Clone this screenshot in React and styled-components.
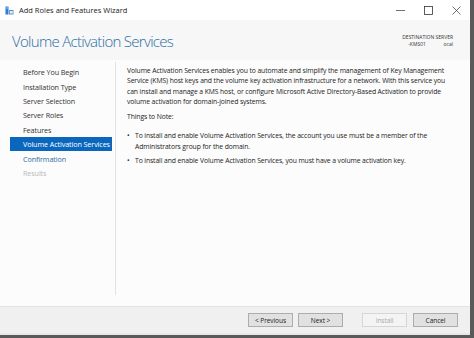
import React from 'react';
import styled, { createGlobalStyle } from 'styled-components';

const GlobalStyle = createGlobalStyle`
  html, body {
    margin: 0;
    padding: 0;
    background: #fff;
  }
  body {
    font-family: "Open Sans", "Noto Sans", sans-serif;
    color: #1e1e1e;
  }
`;

const Frame = styled.div`
  width: 474px;
  height: 338px;
  display: flex;
  background: #5a5a5a;
  overflow: hidden;
`;

const Window = styled.div`
  width: 470px;
  height: 335px;
  display: flex;
  flex-direction: column;
  background: #fcfcfc;
`;

const TitleBar = styled.div`
  height: 20px;
  display: flex;
  align-items: center;
  background: #fff;
  padding-left: 5px;
`;

const TitleText = styled.span`
  font-size: 7.5px;
  margin-left: 5px;
  color: #222;
`;

const Controls = styled.div`
  margin-left: auto;
  display: flex;
`;

const Control = styled.div`
  width: 28px;
  height: 20px;
  display: flex;
  align-items: center;
  justify-content: center;
`;

const Header = styled.div`
  height: 40px;
  display: flex;
  align-items: center;
  justify-content: space-between;
  padding: 0 17px 0 12px;
  background: #f7f7f7;
`;

const PageTitle = styled.h1`
  margin: 2px 0 0;
  font-size: 15px;
  font-weight: 300;
  color: #2b6da3;
  letter-spacing: -0.7px;
`;

const Dest = styled.div`
  font-size: 5px;
  line-height: 7px;
  color: #333;
  text-align: right;
  margin-top: 2px;
`;

const DestRow = styled.div`
  display: flex;
  justify-content: space-between;
  padding-left: 6px;
`;

const Body = styled.div`
  flex: 1;
  display: flex;
  padding-top: 2px;
  background: #fcfcfc;
`;

const Sidebar = styled.ul`
  list-style: none;
  margin: 0;
  padding: 3px 0 0 10px;
  height: 233px;
  box-sizing: border-box;
  border-right: 1px solid #e2e2e2;
  width: 116px;
`;

const Step = styled.li`
  height: 14.4px;
  display: flex;
  align-items: center;
  padding-left: 13px;
  font-size: 7.2px;
  letter-spacing: -0.1px;
  white-space: nowrap;
  margin-right: 3px;
  color: ${p => (p.$active ? '#fff' : p.$state === 'next' ? '#2b6da3' : p.$state === 'off' ? '#b9b9b9' : '#333')};
  background: ${p => (p.$active ? '#0b67bd' : 'transparent')};
`;

const Content = styled.div`
  flex: 1;
  padding: 4px 4px 0 11px;
  font-size: 6.8px;
  letter-spacing: -0.1px;
  line-height: 10.3px;
  color: #222;
  white-space: nowrap;
`;

const Para = styled.p`
  margin: 0 0 5px;
`;

const Bullets = styled.ul`
  margin: 9px 0 0;
  padding: 0;
  list-style: none;
`;

const Bullet = styled.li`
  position: relative;
  padding-left: 8px;
  margin-bottom: 4px;
  &::before {
    content: '•';
    position: absolute;
    left: 0;
  }
`;

const Footer = styled.div`
  height: 26px;
  display: flex;
  align-items: center;
  justify-content: flex-end;
  padding-right: 12px;
  background: #f0f0f0;
  border-top: 1px solid #e3e3e3;
  border-bottom: 2px solid #e8e8e8;
`;

const Button = styled.div`
  width: 45px;
  height: 14px;
  box-sizing: border-box;
  display: flex;
  align-items: center;
  justify-content: center;
  font-size: 6.6px;
  letter-spacing: -0.1px;
  background: ${p => (p.$disabled ? '#f4f4f4' : '#e1e1e1')};
  border: 1px solid ${p => (p.$disabled ? '#d6d6d6' : '#adadad')};
  color: ${p => (p.$disabled ? '#a9a9a9' : '#222')};
  margin-left: ${p => p.$gap || 5}px;
`;

const WizardIcon = () => (
  <svg width="9" height="9" viewBox="0 0 9 9">
    <rect x="0.5" y="0.5" width="3" height="8" fill="#2a7fd4" />
    <rect x="1" y="1.5" width="2" height="1" fill="#9cd0ff" />
    <rect x="4" y="4" width="4.5" height="4.5" fill="#5b8fc7" />
    <rect x="4.8" y="5" width="3" height="2.6" fill="#d7e9fa" />
  </svg>
);

const steps = [
  ['Before You Begin', 'done'],
  ['Installation Type', 'done'],
  ['Server Selection', 'done'],
  ['Server Roles', 'done'],
  ['Features', 'done'],
  ['Volume Activation Services', 'active'],
  ['Confirmation', 'next'],
  ['Results', 'off'],
];

export default function App() {
  return (
    <Frame>
      <GlobalStyle />
      <Window>
        <TitleBar>
          <WizardIcon />
          <TitleText>Add Roles and Features Wizard</TitleText>
          <Controls>
            <Control>
              <svg width="9" height="9" viewBox="0 0 9 9">
                <path d="M0 4.5h9" stroke="#333" strokeWidth="0.7" />
              </svg>
            </Control>
            <Control>
              <svg width="9" height="9" viewBox="0 0 9 9">
                <rect x="0.5" y="0.5" width="8" height="8" fill="none" stroke="#333" strokeWidth="0.8" />
              </svg>
            </Control>
            <Control>
              <svg width="9" height="9" viewBox="0 0 9 9">
                <path d="M0.5 0.5l8 8M8.5 0.5l-8 8" stroke="#333" strokeWidth="0.7" />
              </svg>
            </Control>
          </Controls>
        </TitleBar>
        <Header>
          <PageTitle>Volume Activation Services</PageTitle>
          <Dest>
            <div>DESTINATION SERVER</div>
            <DestRow>
              <span>-KMS01</span>
              <span>ocal</span>
            </DestRow>
          </Dest>
        </Header>
        <Body>
          <Sidebar>
            {steps.map(([label, state]) => (
              <Step key={label} $active={state === 'active'} $state={state}>
                {label}
              </Step>
            ))}
          </Sidebar>
          <Content>
            <Para>
              Volume Activation Services enables you to automate and simplify the management of Key Management
              <br />
              Service (KMS) host keys and the volume key activation infrastructure for a network. With this service you
              <br />
              can install and manage a KMS host, or configure Microsoft Active Directory-Based Activation to provide
              <br />
              volume activation for domain-joined systems.
            </Para>
            <Para>Things to Note:</Para>
            <Bullets>
              <Bullet>
                To install and enable Volume Activation Services, the account you use must be a member of the
                <br />
                Administrators group for the domain.
              </Bullet>
              <Bullet>To install and enable Volume Activation Services, you must have a volume activation key.</Bullet>
            </Bullets>
          </Content>
        </Body>
        <Footer>
          <Button>&lt; Previous</Button>
          <Button>Next &gt;</Button>
          <Button $disabled $gap={19}>Install</Button>
          <Button $gap={6}>Cancel</Button>
        </Footer>
      </Window>
    </Frame>
  );
}
